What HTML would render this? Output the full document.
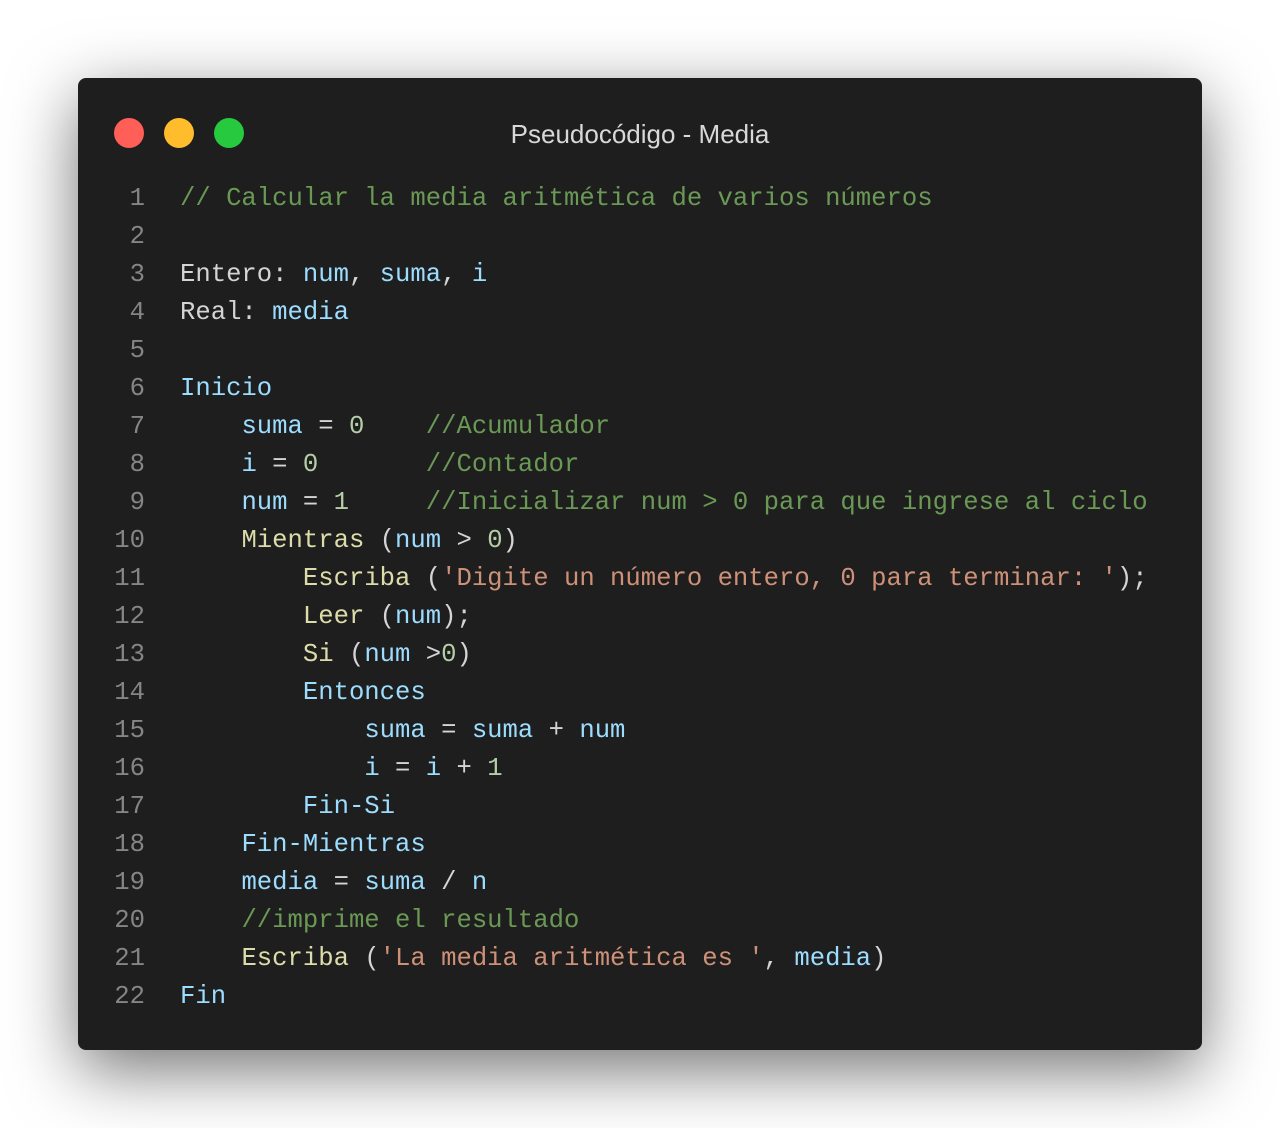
<!DOCTYPE html>
<html><head><meta charset="utf-8"><style>
html,body{margin:0;padding:0;background:#fff;width:1280px;height:1128px;overflow:hidden}
.win{position:absolute;left:78px;top:78px;width:1124px;height:972px;background:#1e1e1e;border-radius:8px;box-shadow:0 20px 68px rgba(0,0,0,0.55)}
.dot{position:absolute;top:40px;width:30px;height:30px;border-radius:50%}
.title{position:absolute;top:41px;left:0;width:1124px;text-align:center;color:#d8d8d8;font:26px "Liberation Sans",sans-serif}
pre{margin:0;position:absolute;left:36px;top:102px;font-family:"Liberation Mono",monospace;font-size:25.6px;line-height:38px;color:#d4d4d4}
.n{color:#858585;display:inline-block;width:31px;text-align:right;margin-right:35px}
.c{color:#6a9955}.v{color:#9cdcfe}.f{color:#dcdcaa}.s{color:#ce9178}.k{color:#b5cea8}
</style></head><body>
<div class="win">
<div class="dot" style="left:36px;background:#ff5f56"></div>
<div class="dot" style="left:86px;background:#ffbd2e"></div>
<div class="dot" style="left:136px;background:#27c93f"></div>
<div class="title">Pseudocódigo - Media</div>
<pre><span class="n">1</span><span class="c">// Calcular la media aritmética de varios números</span>
<span class="n">2</span>
<span class="n">3</span>Entero: <span class="v">num</span>, <span class="v">suma</span>, <span class="v">i</span>
<span class="n">4</span>Real: <span class="v">media</span>
<span class="n">5</span>
<span class="n">6</span><span class="v">Inicio</span>
<span class="n">7</span>    <span class="v">suma</span> = <span class="k">0</span>    <span class="c">//Acumulador</span>
<span class="n">8</span>    <span class="v">i</span> = <span class="k">0</span>       <span class="c">//Contador</span>
<span class="n">9</span>    <span class="v">num</span> = <span class="k">1</span>     <span class="c">//Inicializar num &gt; 0 para que ingrese al ciclo</span>
<span class="n">10</span>    <span class="f">Mientras</span> (<span class="v">num</span> &gt; <span class="k">0</span>)
<span class="n">11</span>        <span class="f">Escriba</span> (<span class="s">'Digite un número entero, 0 para terminar: '</span>);
<span class="n">12</span>        <span class="f">Leer</span> (<span class="v">num</span>);
<span class="n">13</span>        <span class="f">Si</span> (<span class="v">num</span> &gt;<span class="k">0</span>)
<span class="n">14</span>        <span class="v">Entonces</span>
<span class="n">15</span>            <span class="v">suma</span> = <span class="v">suma</span> + <span class="v">num</span>
<span class="n">16</span>            <span class="v">i</span> = <span class="v">i</span> + <span class="k">1</span>
<span class="n">17</span>        <span class="v">Fin-Si</span>
<span class="n">18</span>    <span class="v">Fin-Mientras</span>
<span class="n">19</span>    <span class="v">media</span> = <span class="v">suma</span> / <span class="v">n</span>
<span class="n">20</span>    <span class="c">//imprime el resultado</span>
<span class="n">21</span>    <span class="f">Escriba</span> (<span class="s">'La media aritmética es '</span>, <span class="v">media</span>)
<span class="n">22</span><span class="v">Fin</span></pre>
</div>
</body></html>
